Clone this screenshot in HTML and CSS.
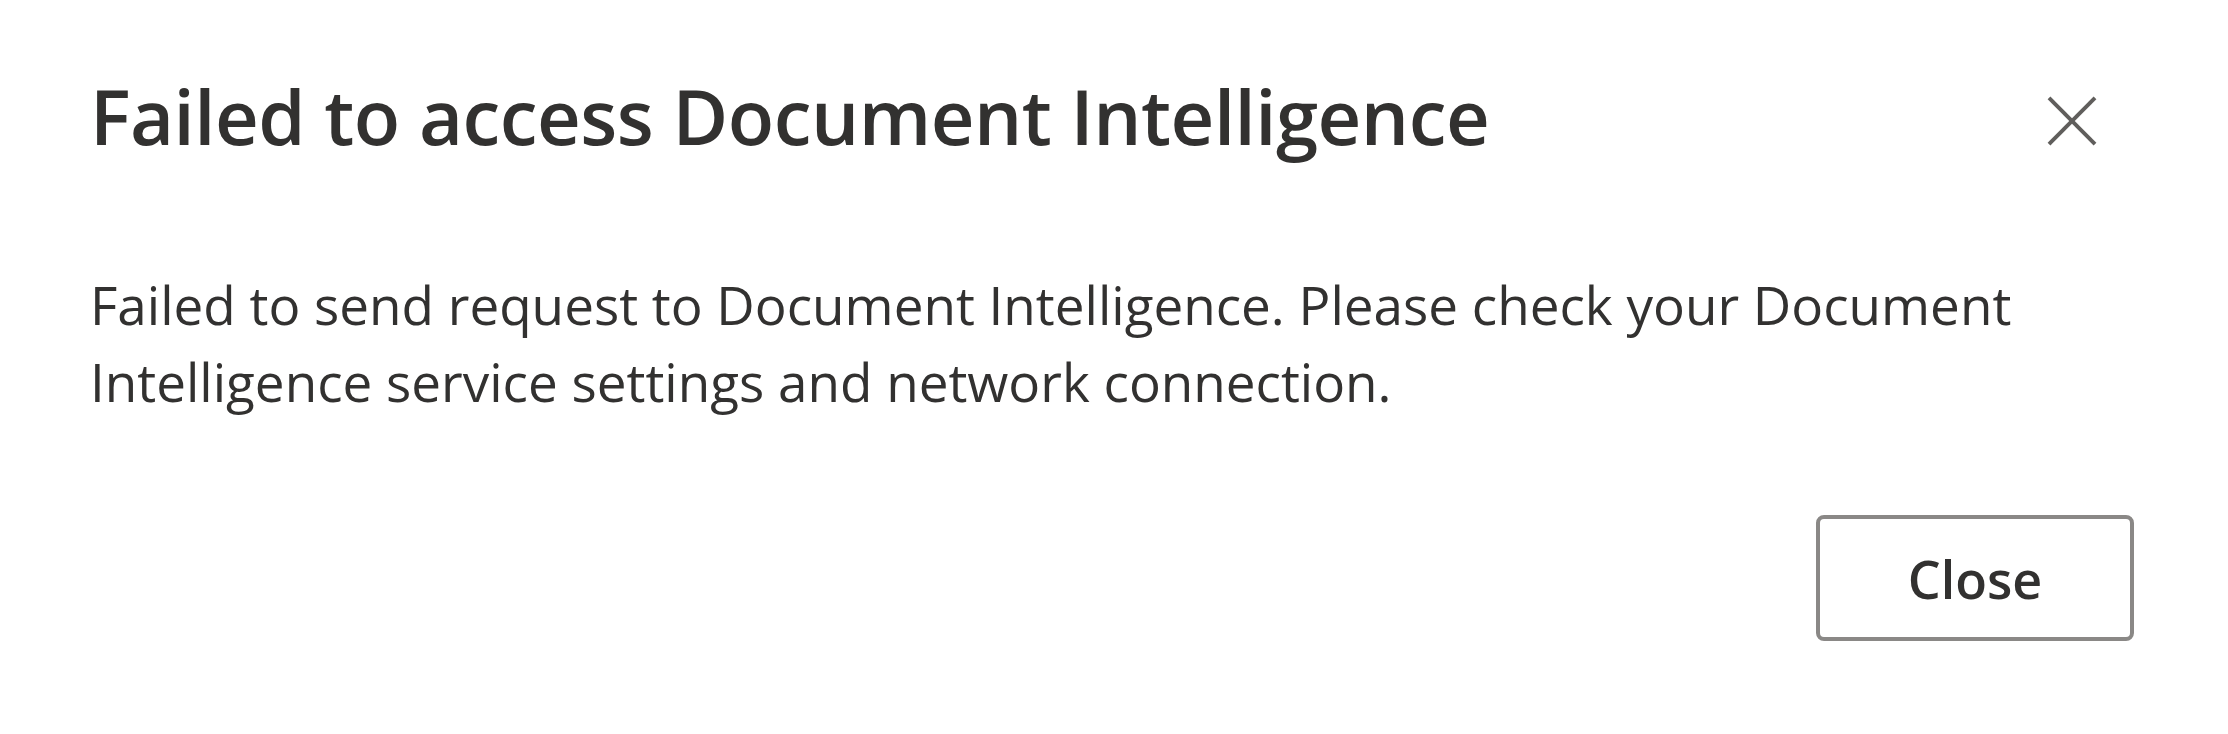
FILE: index.html
```html
<!DOCTYPE html>
<html lang="en">
<head>
<meta charset="utf-8">
<title>Failed to access Document Intelligence</title>
<link rel="stylesheet" href="styles.css">
</head>
<body>
<div class="dialog">
  <div class="header">
    <h1 class="title">Failed to access Document Intelligence</h1>
    <button class="dismiss" aria-label="Close">
      <svg class="dismiss-icon" viewBox="0 0 20 20" aria-hidden="true">
        <line x1="4.1" y1="4.1" x2="15.9" y2="15.9"/>
        <line x1="15.9" y1="4.1" x2="4.1" y2="15.9"/>
      </svg>
    </button>
  </div>
  <p class="message">Failed to send request to Document Intelligence. Please check your Document Intelligence service settings and network connection.</p>
  <div class="footer">
    <button class="btn">Close</button>
  </div>
</div>
</body>
</html>
```

FILE: styles.css
```css
html, body {
  margin: 0;
  padding: 0;
  background: #ffffff;
}

body {
  font-family: "Open Sans", "Noto Sans", "Liberation Sans", sans-serif;
  color: #323130;
}

.dialog {
  padding: 0 94px 0 90px;
}

.header {
  display: flex;
  align-items: flex-start;
  justify-content: space-between;
  padding-top: 58px;
}

.title {
  margin: 3px 0 0 0;
  font-size: 76px;
  line-height: 109px;
  font-weight: 600;
  color: #323130;
  letter-spacing: -0.5px;
}

.dismiss {
  width: 125px;
  height: 125px;
  padding: 0;
  margin: 0;
  border: none;
  background: transparent;
  display: flex;
  align-items: center;
  justify-content: center;
  flex-shrink: 0;
}

.dismiss-icon {
  width: 78px;
  height: 78px;
  stroke: #605e5c;
  stroke-width: 1;
  fill: none;
}

.message {
  margin: 83px 0 0 0;
  font-size: 53px;
  line-height: 77px;
  font-weight: 400;
  color: #323130;
}

.footer {
  display: flex;
  justify-content: flex-end;
  margin-top: 95px;
}

.btn {
  box-sizing: border-box;
  width: 318px;
  height: 126px;
  border: 4px solid #8a8886;
  border-radius: 8px;
  background: #ffffff;
  font-family: "Open Sans", "Noto Sans", "Liberation Sans", sans-serif;
  font-size: 52px;
  font-weight: 600;
  color: #323130;
  padding: 0;
}
```
